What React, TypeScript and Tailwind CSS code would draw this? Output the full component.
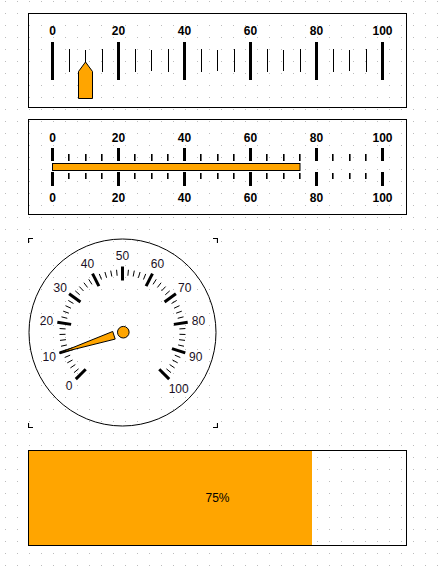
import React from "react";

const ORANGE = "#FFA500";

// value (0..100) -> x inside a linear scale panel (panel-outer coords)
const sx = (v: number) => 24.5 + 3.3 * v;
const steps = Array.from({ length: 21 }, (_, i) => i * 5);
const majors = steps.filter((v) => v % 20 === 0);
const minors = steps.filter((v) => v % 20 !== 0);

function ScaleLabels({ y }: { y: number }) {
  return (
    <>
      {majors.map((v) => (
        <text key={v} x={sx(v)} y={y} textAnchor="middle" fontSize={12} fontWeight="bold" fill="#000">
          {v}
        </text>
      ))}
    </>
  );
}

function PointerScale() {
  const px = sx(10);
  return (
    <div className="relative h-[95px] w-[379px] border border-black">
      <svg className="absolute -left-px -top-px" width={379} height={95}>
        <ScaleLabels y={22} />
        {majors.map((v) => (
          <rect key={v} x={Math.round(sx(v) - 1.5)} y={29} width={3} height={38} fill="#000" />
        ))}
        {minors.map((v) => (
          <rect
            key={v}
            x={Math.round(sx(v) - 0.5)}
            y={v % 10 === 0 ? 37 : 36}
            width={1}
            height={v % 10 === 0 ? 21 : 23}
            fill="#000"
          />
        ))}
        <polygon
          points={`${px},49 ${px + 7},58.5 ${px + 7},85.5 ${px - 7},85.5 ${px - 7},58.5`}
          fill={ORANGE}
          stroke="#000"
          strokeWidth={1}
        />
      </svg>
    </div>
  );
}

function BarScale() {
  return (
    <div className="relative mt-[11px] h-[96px] w-[379px] border border-black">
      <svg className="absolute -left-px -top-px" width={379} height={96}>
        <ScaleLabels y={22.5} />
        <ScaleLabels y={83} />
        {majors.map((v) => (
          <g key={v} fill="#000">
            <rect x={Math.round(sx(v) - 1.5)} y={29} width={3} height={13} />
            <rect x={Math.round(sx(v) - 1.5)} y={53} width={3} height={14} />
          </g>
        ))}
        {minors.map((v) => (
          <g key={v} fill="#000">
            <rect x={Math.round(sx(v) - 1)} y={35} width={1.6} height={7} />
            <rect x={Math.round(sx(v) - 1)} y={54} width={1.6} height={6} />
          </g>
        ))}
        <rect x={24.5} y={44.5} width={sx(75) - 24.5} height={7} fill={ORANGE} stroke="#000" strokeWidth={1} />
      </svg>
    </div>
  );
}

const C = 94.5;
const ang = (v: number) => ((-135 + 2.7 * v) * Math.PI) / 180;
const pt = (v: number, r: number) => [C + r * Math.sin(ang(v)), C - r * Math.cos(ang(v))];

function Dial() {
  const majorVals = Array.from({ length: 11 }, (_, i) => i * 10);
  const minorVals = Array.from({ length: 51 }, (_, i) => i * 2).filter((v) => v % 10 !== 0);
  const labelR = (v: number) => (v === 100 ? 79.5 : v === 0 ? 75.5 : 77);

  const value = 10;
  const a = ang(value);
  const dx = Math.sin(a);
  const dy = -Math.cos(a);
  const tip = [C + 66.5 * dx, C + 66.5 * dy];
  const bc = [C + 9 * dx, C + 9 * dy];
  const b1 = [bc[0] - 4 * dy, bc[1] + 4 * dx];
  const b2 = [bc[0] + 4 * dy, bc[1] - 4 * dx];

  return (
    <div className="mt-[23px] h-[190px] w-[190px]">
      <svg width={190} height={190} className="block">
        <g stroke="#000" strokeWidth={1.2} fill="none">
          <path d="M0.5 5 V0.5 H5" />
          <path d="M185 0.5 H189.5 V5" />
          <path d="M0.5 185 V189.5 H5" />
          <path d="M185 189.5 H189.5 V185" />
        </g>
        <circle cx={C} cy={C} r={93.5} fill="none" stroke="#000" strokeWidth={1} />
        {majorVals.map((v) => {
          const [x1, y1] = pt(v, 52);
          const [x2, y2] = pt(v, 66);
          return <line key={v} x1={x1} y1={y1} x2={x2} y2={y2} stroke="#000" strokeWidth={3} />;
        })}
        {minorVals.map((v) => {
          const [x1, y1] = pt(v, 57);
          const [x2, y2] = pt(v, 63);
          return <line key={v} x1={x1} y1={y1} x2={x2} y2={y2} stroke="#000" strokeWidth={1} />;
        })}
        {majorVals.map((v) => {
          const [x, y] = pt(v, labelR(v));
          return (
            <text key={v} x={x} y={y + 4.3} textAnchor="middle" fontSize={12} fill="#1a0f24">
              {v}
            </text>
          );
        })}
        <polygon
          points={`${tip[0]},${tip[1]} ${b1[0]},${b1[1]} ${b2[0]},${b2[1]}`}
          fill={ORANGE}
          stroke="#000"
          strokeWidth={1}
          strokeLinejoin="miter"
        />
        <circle cx={C + 0.8} cy={C - 0.3} r={5.8} fill={ORANGE} stroke="#000" strokeWidth={1} />
      </svg>
    </div>
  );
}

function ProgressBar() {
  return (
    <div className="relative mt-[22px] flex h-[96px] w-[379px] border border-black">
      <div className="h-full w-[75%] bg-[#FFA500]" />
      <span className="absolute inset-0 flex items-center justify-center text-[12px] text-black">75%</span>
    </div>
  );
}

export default function App() {
  return (
    <div className="flex h-[575px] w-[442px] flex-col bg-white bg-[radial-gradient(circle_at_0.5px_0.5px,#bcbcbc_0.7px,transparent_0.7px)] bg-[length:12px_12px] bg-[position:5px_1px] pl-[28px] pt-[13px] font-['Liberation_Sans',Arial,sans-serif] text-black">
      <PointerScale />
      <BarScale />
      <Dial />
      <ProgressBar />
    </div>
  );
}
